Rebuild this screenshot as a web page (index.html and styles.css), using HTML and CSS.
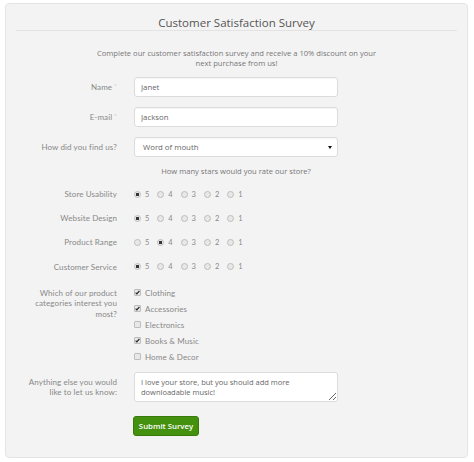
FILE: index.html
```html
<!DOCTYPE html>
<html lang="en">
<head>
<meta charset="utf-8">
<title>Customer Satisfaction Survey</title>
<link rel="stylesheet" href="styles.css">
</head>
<body>
<div class="panel">
  <h1 class="title">Customer Satisfaction Survey</h1>
  <p class="intro">Complete our customer satisfaction survey and receive a 10% discount on your<br>next purchase from us!</p>
  <form class="form">
    <div class="row r-first">
      <label class="lbl">Name <span class="req">*</span></label>
      <input class="field" type="text" value="Janet">
    </div>
    <div class="row r-next">
      <label class="lbl">E-mail <span class="req">*</span></label>
      <input class="field" type="text" value="Jackson">
    </div>
    <div class="row r-next">
      <label class="lbl">How did you find us?</label>
      <div class="field select"><span>Word of mouth</span><svg class="caret" width="4" height="3" viewBox="0 0 4 3"><path d="M0 0H4L2 3Z" fill="#111"/></svg></div>
    </div>
    <div class="row r-head">
      <span></span>
      <p class="stars-q">How many stars would you rate our store?</p>
    </div>
    <div class="row rate rate-first">
      <span class="lbl">Store Usability</span>
      <div class="opts">
        <span class="opt"><span class="radio on"></span>5</span>
        <span class="opt"><span class="radio"></span>4</span>
        <span class="opt"><span class="radio"></span>3</span>
        <span class="opt"><span class="radio"></span>2</span>
        <span class="opt"><span class="radio"></span>1</span>
      </div>
    </div>
    <div class="row rate">
      <span class="lbl">Website Design</span>
      <div class="opts">
        <span class="opt"><span class="radio on"></span>5</span>
        <span class="opt"><span class="radio"></span>4</span>
        <span class="opt"><span class="radio"></span>3</span>
        <span class="opt"><span class="radio"></span>2</span>
        <span class="opt"><span class="radio"></span>1</span>
      </div>
    </div>
    <div class="row rate">
      <span class="lbl">Product Range</span>
      <div class="opts">
        <span class="opt"><span class="radio"></span>5</span>
        <span class="opt"><span class="radio on"></span>4</span>
        <span class="opt"><span class="radio"></span>3</span>
        <span class="opt"><span class="radio"></span>2</span>
        <span class="opt"><span class="radio"></span>1</span>
      </div>
    </div>
    <div class="row rate">
      <span class="lbl">Customer Service</span>
      <div class="opts">
        <span class="opt"><span class="radio on"></span>5</span>
        <span class="opt"><span class="radio"></span>4</span>
        <span class="opt"><span class="radio"></span>3</span>
        <span class="opt"><span class="radio"></span>2</span>
        <span class="opt"><span class="radio"></span>1</span>
      </div>
    </div>
    <div class="row r-checks">
      <span class="lbl lbl-multi">Which of our product<br>categories interest you<br>most?</span>
      <div class="checks">
        <span class="chk"><span class="cb"><svg width="5" height="5" viewBox="0 0 5 5"><path d="M0.6 2.6L1.9 3.9L4.4 0.8" fill="none" stroke="#222" stroke-width="1.2"/></svg></span>Clothing</span>
        <span class="chk"><span class="cb"><svg width="5" height="5" viewBox="0 0 5 5"><path d="M0.6 2.6L1.9 3.9L4.4 0.8" fill="none" stroke="#222" stroke-width="1.2"/></svg></span>Accessories</span>
        <span class="chk"><span class="cb"></span>Electronics</span>
        <span class="chk"><span class="cb"><svg width="5" height="5" viewBox="0 0 5 5"><path d="M0.6 2.6L1.9 3.9L4.4 0.8" fill="none" stroke="#222" stroke-width="1.2"/></svg></span>Books &amp; Music</span>
        <span class="chk"><span class="cb"></span>Home &amp; Decor</span>
      </div>
    </div>
    <div class="row r-msg">
      <label class="lbl lbl-msg">Anything else you would<br>like to let us know:</label>
      <textarea class="area">I love your store, but you should add more downloadable music!</textarea>
    </div>
    <div class="row r-submit">
      <span></span>
      <div><button class="btn" type="button">Submit Survey</button></div>
    </div>
  </form>
</div>
</body>
</html>
```

FILE: styles.css
```css
body {
  margin: 0;
  background: #ffffff;
  font-family: "Open Sans", "Liberation Sans", sans-serif;
}

.panel {
  box-sizing: border-box;
  width: 463px;
  height: 455px;
  margin: 3px 0 0 5px;
  padding: 0 10px;
  background: #f3f3f3;
  border: 1px solid #e4e4e4;
  border-radius: 4px;
}

.title {
  margin: 0;
  padding: 12px 0 0;
  font-size: 11.5px;
  line-height: 14px;
  font-weight: 400;
  color: #555;
  text-align: center;
  border-bottom: 1px solid #e3e3e3;
}

.intro {
  margin: 17px 0 0;
  font-size: 7.6px;
  line-height: 10px;
  color: #777;
  text-align: center;
}

.form {
  margin: 9px 0 0;
}

.row {
  display: grid;
  grid-template-columns: 101px 204px;
  column-gap: 17px;
  align-items: center;
}

.r-next { margin-top: 10px; }
.r-head { margin-top: 9px; }
.rate { height: 14px; margin-top: 10.33px; }
.rate-first { margin-top: 11px; }
.r-checks { margin-top: 11px; align-items: start; }
.r-msg { margin-top: 7px; align-items: start; }
.r-submit { margin-top: 10px; }

.lbl {
  text-align: right;
  font-family: Lato, "Open Sans", sans-serif;
  font-size: 8px;
  letter-spacing: 0.1px;
  line-height: 10.5px;
  color: #888;
}

.req {
  color: #bbb;
  font-size: 6px;
  vertical-align: 2px;
}

.lbl-multi { padding-top: 2.75px; }
.lbl-msg { padding-top: 5px; line-height: 10px; }

.field {
  box-sizing: border-box;
  width: 204px;
  height: 20px;
  margin: 0;
  padding: 0 6px;
  border: 1px solid #dcdcdc;
  border-radius: 3px;
  background: #fff;
  font-family: "Open Sans", sans-serif;
  font-size: 7.8px;
  color: #666;
  box-shadow: inset 0 1px 1px rgba(0, 0, 0, 0.04);
  outline: none;
}

.select {
  display: flex;
  align-items: center;
  justify-content: space-between;
  padding: 0 5px 0 8px;
}

.caret { display: block; }

.stars-q {
  margin: 0;
  font-size: 7.6px;
  line-height: 10px;
  color: #777;
  text-align: center;
}

.opts {
  display: flex;
  height: 14px;
  align-items: center;
}

.opt {
  flex: 0 0 23.3px;
  display: flex;
  align-items: center;
  gap: 4px;
  font-family: Lato, "Open Sans", sans-serif;
  font-size: 7.5px;
  color: #8a8a8a;
}

.radio {
  box-sizing: border-box;
  width: 7px;
  height: 7px;
  border: 1px solid #bdbdbd;
  border-radius: 50%;
  background: #e8e8e8;
}

.radio.on {
  background: radial-gradient(circle, #333 0 1.4px, #e8e8e8 1.9px);
}

.checks {
  display: flex;
  flex-direction: column;
}

.chk {
  height: 16px;
  display: flex;
  align-items: center;
  gap: 4px;
  font-family: Lato, "Open Sans", sans-serif;
  font-size: 8px;
  letter-spacing: 0.1px;
  color: #888;
}

.cb {
  box-sizing: border-box;
  width: 7px;
  height: 7px;
  border: 1px solid #bdbdbd;
  border-radius: 1px;
  background: #e8e8e8;
  display: flex;
  align-items: center;
  justify-content: center;
}

.cb svg { display: block; }

.area {
  box-sizing: border-box;
  width: 204px;
  height: 30px;
  margin: 0;
  padding: 4px 6px;
  border: 1px solid #dcdcdc;
  border-radius: 3px;
  background: #fff;
  font-family: "Open Sans", sans-serif;
  font-size: 7.5px;
  line-height: 10px;
  color: #666;
  overflow: hidden;
  outline: none;
}

.btn {
  box-sizing: border-box;
  width: 66px;
  height: 20px;
  margin: 0 0 0 -1px;
  padding: 0;
  border: 1px solid #387a0c;
  border-radius: 3px;
  background: #44900f;
  color: #fff;
  font-family: "Open Sans", sans-serif;
  font-size: 7.8px;
  font-weight: 600;
}
```
